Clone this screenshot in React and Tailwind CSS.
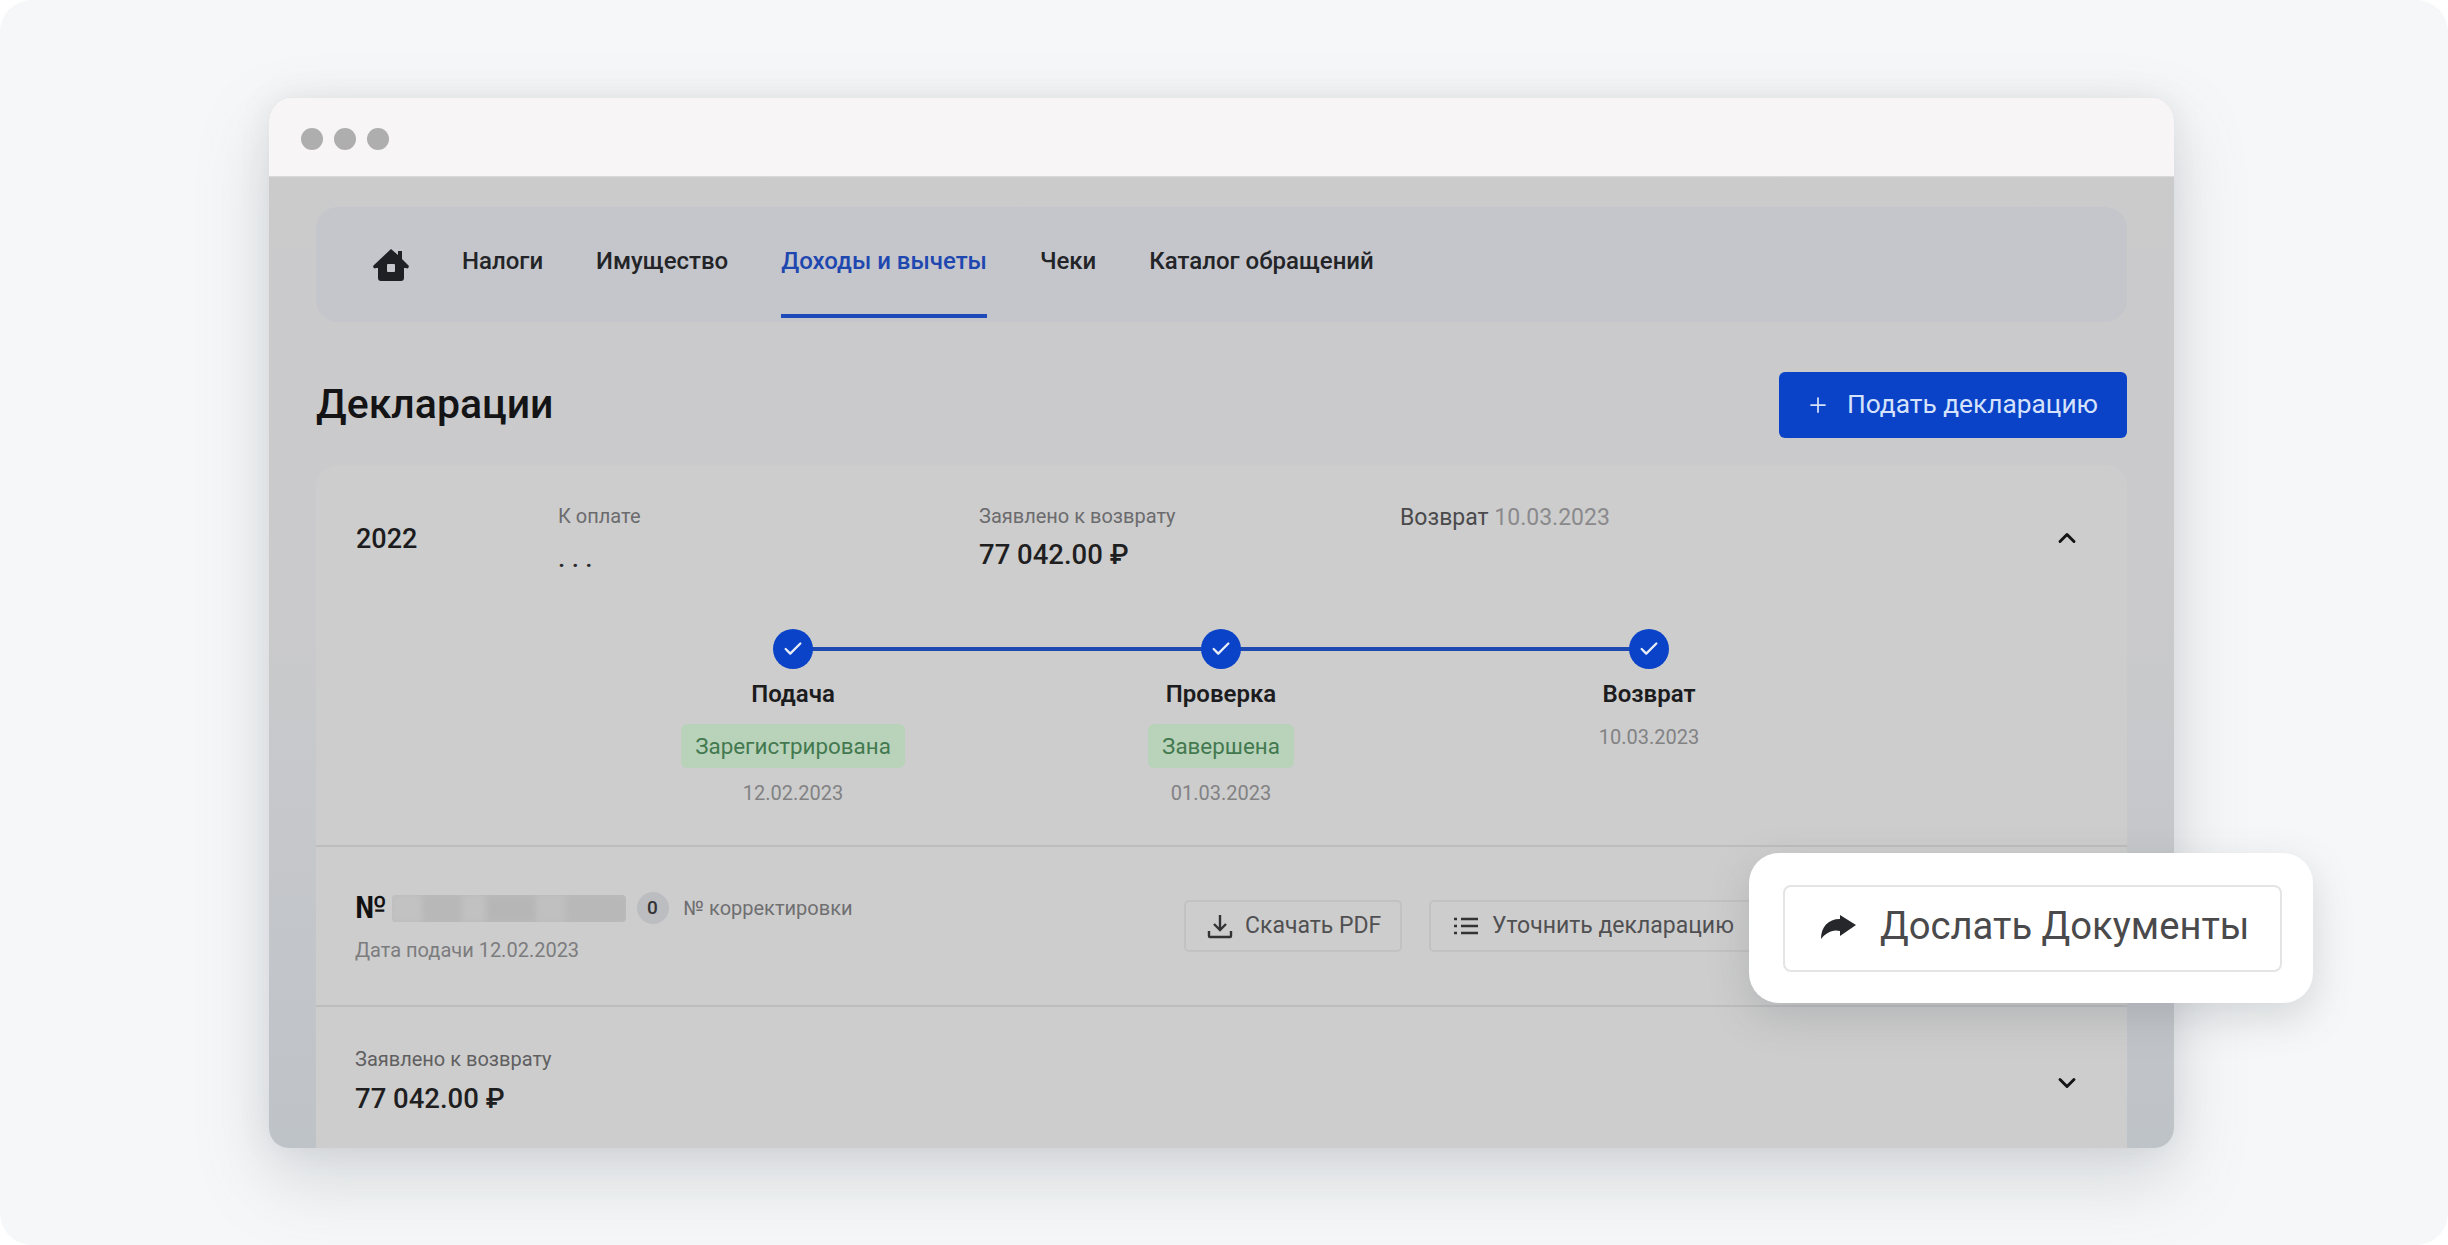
import React from "react";
import { ChevronUp, ChevronDown, Plus, Check } from "lucide-react";

const font = "font-['Roboto',sans-serif]";

function HomeIcon() {
  return (
    <svg viewBox="0 0 36 34" className="w-[36px] h-[34px] block">
      <path fill="#1f2023" d="M18 1 L25 7 V3 H29 V11 L35 17 A1 1 0 0 1 33 20 H31 V30 A3 3 0 0 1 28 33 H8 A3 3 0 0 1 5 30 V20 H3 A1 1 0 0 1 1 17 Z" />
      <rect x="14" y="16" width="8" height="8" rx="1" fill="#c6c7cc" />
    </svg>
  );
}

function Step({ title, badge, date }) {
  return (
    <div className="w-[240px] flex flex-col items-center">
      <div className="relative z-10 w-[40px] h-[40px] rounded-full bg-[#0a43c8] flex items-center justify-center">
        <Check className="w-[22px] h-[22px] text-[#e8edf7]" strokeWidth={2.5} />
      </div>
      <div className="mt-[10px] h-[30px] leading-[30px] text-[24px] font-semibold text-[#1c1c1e]">{title}</div>
      {badge && (
        <div className="mt-[15px] h-[44px] leading-[44px] px-[14px] rounded-[6px] bg-[#b9d3bb] text-[22.4px] text-[#43794f]">{badge}</div>
      )}
      <div className={`${badge ? "mt-[12px]" : "mt-[15px]"} h-[26px] leading-[26px] text-[20px] text-[#828284]`}>{date}</div>
    </div>
  );
}

function NavLink({ children, active }) {
  return (
    <div className={`h-full relative flex items-center pb-[8px] text-[24px] font-medium ${active ? "text-[#1e47b0]" : "text-[#232427]"}`}>
      {children}
      {active && <span className="absolute left-0 right-0 top-[107px] h-[4px] bg-[#1e49b8]" />}
    </div>
  );
}

function OutlineButton({ icon, children, className }) {
  return (
    <div className={`h-[52px] rounded-[5px] border-2 border-[#c2c2c2] flex items-center text-[23px] text-[#505052] ${className}`}>
      {icon}
      {children}
    </div>
  );
}

export default function App() {
  return (
    <div className={`${font} relative w-[2448px] h-[1245px] bg-white overflow-hidden`}>
      <div className="w-full h-full rounded-[32px] bg-[#f5f7f8] pt-[97px] pl-[269px]">
        <div className="w-[1905px] h-[1051px] rounded-t-[24px] rounded-b-[20px] overflow-hidden flex flex-col bg-gradient-to-b from-[#cbcbcc] via-[#cacacc] to-[#bec3c8] shadow-[0_30px_70px_rgba(120,125,135,0.26),0_0_30px_rgba(120,125,135,0.12)]">
          <div className="h-[80px] shrink-0 bg-[#f7f5f5] flex items-center gap-[11px] pl-[32px] pt-[4px] border-t border-[#e8e8e8] border-b-[#d9d9d9] border-b">
            <span className="w-[22px] h-[22px] rounded-full bg-[#aeaeae]" />
            <span className="w-[22px] h-[22px] rounded-full bg-[#aeaeae]" />
            <span className="w-[22px] h-[22px] rounded-full bg-[#aeaeae]" />
          </div>
          <div className="flex-1 min-h-0 px-[47px] pt-[30px] flex flex-col">
            <div className="h-[115px] shrink-0 rounded-[22px] bg-[#c5c6cc] flex items-center pl-[57px]">
              <HomeIcon />
              <div className="h-full flex items-center gap-[53px] ml-[53px]">
                <NavLink>Налоги</NavLink>
                <NavLink>Имущество</NavLink>
                <NavLink active>Доходы и вычеты</NavLink>
                <NavLink>Чеки</NavLink>
                <NavLink>Каталог обращений</NavLink>
              </div>
            </div>
            <div className="mt-[50px] h-[66px] shrink-0 flex items-center justify-between">
              <h1 className="text-[41px] font-medium text-[#141416]">Декларации</h1>
              <div className="w-[348px] h-[66px] rounded-[6px] bg-[#0a43c8] text-[#d5e2fb] text-[26.3px] flex items-center pl-[27px] gap-[17px]">
                <Plus className="w-[24px] h-[24px]" strokeWidth={1.75} />
                Подать декларацию
              </div>
            </div>
            <div className="mt-[27px] flex-1 rounded-t-[22px] bg-[#cdcdcd] flex flex-col overflow-hidden">
              <div className="h-[382px] shrink-0 border-b-2 border-[#bdbdbd] pt-[37px] px-[39px] relative">
                <div className="flex items-start">
                  <div className="w-[203px] text-[27px] font-medium text-[#1c1c1e] pt-[21px] pl-[1px] leading-[32px]">2022</div>
                  <div className="w-[421px]">
                    <div className="text-[20px] leading-[28px] text-[#6b6b6d]">К оплате</div>
                    <div className="text-[26px] leading-[32px] mt-[12px] text-[#2b2b2d] font-medium">. . .</div>
                  </div>
                  <div className="w-[421px]">
                    <div className="text-[20px] leading-[28px] text-[#6b6b6d]">Заявлено к возврату</div>
                    <div className="text-[27.5px] leading-[32px] mt-[9px] font-medium text-[#1f1f21]">77 042.00 ₽</div>
                  </div>
                  <div className="text-[23px] leading-[32px] text-[#4a4a4c]">Возврат <span className="text-[#8a8a8c]">10.03.2023</span></div>
                  <ChevronUp className="ml-auto mr-[7px] mt-[22px] w-[28px] h-[28px] text-[#141416]" strokeWidth={2.5} />
                </div>
                <div className="relative mt-[55px] ml-[318px] flex gap-[188px]">
                  <div className="absolute left-[120px] top-[18px] w-[856px] h-[4px] bg-[#1e49b0]" />
                  <Step title="Подача" badge="Зарегистрирована" date="12.02.2023" />
                  <Step title="Проверка" badge="Завершена" date="01.03.2023" />
                  <Step title="Возврат" date="10.03.2023" />
                </div>
              </div>
              <div className="h-[160px] shrink-0 border-b-2 border-[#bdbdbd] px-[39px] pt-[45px] flex items-start justify-between">
                <div>
                  <div className="flex items-center h-[32px]">
                    <span className="text-[31px] font-semibold text-[#111113]">№</span>
                    <div className="ml-[5px] w-[234px] h-[27px] rounded-[4px] bg-[#bcbcbc] overflow-hidden">
                      <div className="flex h-full blur-[3px]">
                        <span className="w-[30px] bg-[#c2c2c2]" />
                        <span className="w-[40px] bg-[#b8b8b8]" />
                        <span className="w-[24px] bg-[#c1c1c1]" />
                        <span className="w-[50px] bg-[#b6b6b6]" />
                        <span className="w-[30px] bg-[#c0c0c0]" />
                        <span className="w-[60px] bg-[#b8b8b8]" />
                      </div>
                    </div>
                    <span className="ml-[11px] w-[32px] h-[32px] rounded-full bg-[#bcbdc0] flex items-center justify-center text-[19px] font-medium text-[#333335]">0</span>
                    <span className="ml-[15px] text-[20px] text-[#6f6f71]">№ корректировки</span>
                  </div>
                  <div className="mt-[12px] text-[20px] leading-[28px] text-[#7c7c7e]">Дата подачи 12.02.2023</div>
                </div>
                <div className="flex gap-[27px] mr-[323px] items-center h-[52px] mt-[8px]">
                  <OutlineButton
                    className="w-[218px] pl-[20px] gap-[11px]"
                    icon={
                      <svg viewBox="0 0 28 28" className="w-[28px] h-[28px]" fill="none" stroke="#333335" strokeWidth="2.4">
                        <path d="M14 3v14M8 12l6 6 6-6M3 19v5a1 1 0 0 0 1 1h20a1 1 0 0 0 1-1v-5" />
                      </svg>
                    }
                  >
                    Скачать PDF
                  </OutlineButton>
                  <OutlineButton
                    className="w-[336px] pl-[22px] gap-[13px]"
                    icon={
                      <svg viewBox="0 0 26 24" className="w-[26px] h-[24px]" fill="none" stroke="#333335" strokeWidth="2.6">
                        <path d="M1 5h3M8 5h17M1 12h3M8 12h17M1 19h3M8 19h17" />
                      </svg>
                    }
                  >
                    Уточнить декларацию
                  </OutlineButton>
                </div>
              </div>
              <div className="px-[39px] pt-[38px] flex items-start">
                <div>
                  <div className="text-[20px] leading-[28px] text-[#5f5f61]">Заявлено к возврату</div>
                  <div className="mt-[10px] text-[27.5px] leading-[32px] font-medium text-[#1f1f21]">77 042.00 ₽</div>
                </div>
                <ChevronDown className="ml-auto mr-[7px] mt-[24px] w-[28px] h-[28px] text-[#141416]" strokeWidth={2.5} />
              </div>
            </div>
          </div>
        </div>
      </div>
      <div className="absolute left-[1749px] top-[853px] w-[564px] h-[150px] rounded-[30px] bg-white shadow-[0_14px_40px_rgba(90,95,105,0.22)] flex items-center pl-[34px]">
        <div className="w-[499px] h-[87px] pb-[2px] rounded-[8px] border-2 border-[#e4e4e4] flex items-center pl-[35px] gap-[24px] text-[38.2px] text-[#4a4a4c]">
          <svg viewBox="0 0 36 24" className="w-[36px] h-[24px]">
            <path fill="#26272a" d="M20 0 L36 10 L20 21 V16 C12 14 6 18 1 24 C1 12 8 4 20 4 Z" />
          </svg>
          Дослать Документы
        </div>
      </div>
    </div>
  );
}
